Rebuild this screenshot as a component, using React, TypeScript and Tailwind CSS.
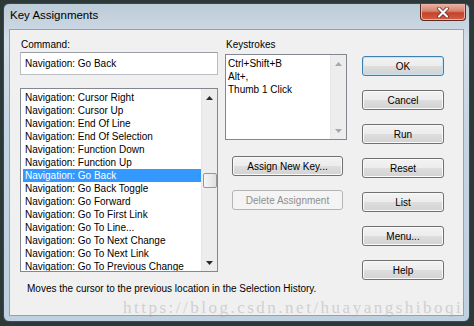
import React from "react";

const commands = [
  "Navigation: Cursor Right",
  "Navigation: Cursor Up",
  "Navigation: End Of Line",
  "Navigation: End Of Selection",
  "Navigation: Function Down",
  "Navigation: Function Up",
  "Navigation: Go Back",
  "Navigation: Go Back Toggle",
  "Navigation: Go Forward",
  "Navigation: Go To First Link",
  "Navigation: Go To Line...",
  "Navigation: Go To Next Change",
  "Navigation: Go To Next Link",
  "Navigation: Go To Previous Change",
];

const keystrokes = ["Ctrl+Shift+B", "Alt+,", "Thumb 1 Click"];

const Arrow = ({ up, color }: { up?: boolean; color: string }) => (
  <svg width="7" height="4" viewBox="0 0 7 4">
    <path d={up ? "M0 4L3.5 0L7 4Z" : "M0 0L3.5 4L7 0Z"} fill={color} />
  </svg>
);

const Button = ({
  label,
  primary,
  disabled,
  wide,
}: {
  label: string;
  primary?: boolean;
  disabled?: boolean;
  wide?: boolean;
}) => (
  <div
    className={`flex h-[20px] items-center justify-center rounded-[3px] border text-[10px] leading-[13px] ${
      wide ? "w-[111px]" : "w-[82px]"
    } ${
      disabled
        ? "border-[#b3b6b9] bg-[#f4f4f4] text-[#8f8f8f]"
        : primary
        ? "border-[#3c7fb1] bg-[linear-gradient(#f3f3f3,#ececec_50%,#dedede_50%,#d2d2d2)] text-black shadow-[inset_0_0_0_1px_#c4e4f7]"
        : "border-[#707070] bg-[linear-gradient(#f3f3f3,#ececec_50%,#dedede_50%,#d2d2d2)] text-black shadow-[inset_0_0_0_1px_#fafafa]"
    }`}
  >
    {label}
  </div>
);

const App = () => {
  return (
    <div className="relative h-[326px] w-[474px] overflow-hidden bg-[#2d3838] pl-[3px] pt-[3px] font-['Liberation_Sans',Arial,sans-serif]">
      <div className="flex h-[319px] w-[467px] flex-col rounded-[6px] border border-[#3b4856] bg-[linear-gradient(180deg,#bccbd8,#d3dfe9_12%,#c6d5e3_40%,#bfd0e1)]">
        {/* title bar */}
        <div className="flex h-[25px] items-start justify-between">
          <span className="pl-[6px] pt-[4px] text-[11.5px] leading-[14px] text-black">
            Key Assignments
          </span>
          <div className="mr-[3px] flex h-[17px] w-[46px] items-center justify-center rounded-b-[4px] border border-t-0 border-[#5a2b24] bg-[linear-gradient(#e8b2a3,#d7826d_45%,#c4432b_55%,#d35e42)] shadow-[inset_0_0_0_1px_#eeb3a4]">
            <svg width="12" height="11" viewBox="0 0 12 11">
              <path d="M2 1.5L10 9.5M10 1.5L2 9.5" stroke="#5a2a22" strokeWidth="3.6" strokeLinecap="round" />
              <path d="M2 1.5L10 9.5M10 1.5L2 9.5" stroke="#ffffff" strokeWidth="2.2" strokeLinecap="round" />
            </svg>
          </div>
        </div>

        {/* client area */}
        <div className="mx-[5px] flex h-[287px] flex-col border border-[#8fa3b6] bg-[#f0f0f0] text-[10px] leading-[13px] text-black">
          <div className="flex">
            {/* command column */}
            <div className="ml-[10px] flex w-[198px] flex-col pt-[8px]">
              <span className="h-[13px] pl-[1px]">Command:</span>
              <div className="mt-[1px] flex h-[23px] items-center border border-[#b9bcc3] border-t-[#9a9ea6] bg-white pl-[4px]">
                Navigation: Go Back
              </div>
              <div className="mt-[13px] flex h-[184px] border border-[#828790] bg-white">
                <div className="flex-1 overflow-hidden pt-[2px]">
                  {commands.map((c) => (
                    <div
                      key={c}
                      className={`ml-[2px] h-[13px] whitespace-nowrap pl-[2px] ${
                        c === "Navigation: Go Back" ? "bg-[#3399ff] text-white" : ""
                      }`}
                    >
                      {c}
                    </div>
                  ))}
                </div>
                <div className="flex w-[16px] flex-col border-l border-[#e6e6e6] bg-[#ededed]">
                  <div className="flex h-[17px] items-center justify-center">
                    <Arrow up color="#2b2b2b" />
                  </div>
                  <div className="flex flex-1 flex-col items-center">
                    <div className="h-[67px]" />
                    <div className="h-[15px] w-[14px] rounded-[2px] border border-[#979797] bg-[linear-gradient(90deg,#f6f6f6,#e0e0e0)]" />
                  </div>
                  <div className="flex h-[17px] items-center justify-center">
                    <Arrow color="#2b2b2b" />
                  </div>
                </div>
              </div>
            </div>

            {/* keystrokes column */}
            <div className="ml-[7px] flex w-[122px] flex-col pt-[8px]">
              <span className="h-[13px] pl-[1px]">Keystrokes</span>
              <div className="mt-[3px] flex h-[86px] border border-[#828790] bg-white">
                <div className="flex-1 pl-[2px] pt-[2px]">
                  {keystrokes.map((k) => (
                    <div key={k} className="h-[13px] whitespace-nowrap">
                      {k}
                    </div>
                  ))}
                </div>
                <div className="flex w-[16px] flex-col justify-between border-l border-[#e6e6e6] bg-[#ededed]">
                  <div className="flex h-[17px] items-center justify-center">
                    <Arrow up color="#a8a8a8" />
                  </div>
                  <div className="flex h-[17px] items-center justify-center">
                    <Arrow color="#a8a8a8" />
                  </div>
                </div>
              </div>
              <div className="ml-[7px] mt-[16px] flex flex-col gap-[14px]">
                <Button label="Assign New Key..." wide />
                <Button label="Delete Assignment" wide disabled />
              </div>
            </div>

            {/* buttons column */}
            <div className="ml-[15px] flex flex-col gap-[14px] pt-[26px]">
              <Button label="OK" primary />
              <Button label="Cancel" />
              <Button label="Run" />
              <Button label="Reset" />
              <Button label="List" />
              <Button label="Menu..." />
              <Button label="Help" />
            </div>
          </div>

          <p className="mt-[2px] pl-[17px]">
            Moves the cursor to the previous location in the Selection History.
          </p>
        </div>
      </div>

      {/* csdn watermark */}
      <span className="pointer-events-none absolute left-[123px] top-[298px] whitespace-nowrap font-['Liberation_Serif',serif] text-[17px] leading-[20px] tracking-[2.5px] text-[rgba(175,175,175,0.5)]">
        https://blog.csdn.net/huayangshiboqi
      </span>
    </div>
  );
};

export default App;
